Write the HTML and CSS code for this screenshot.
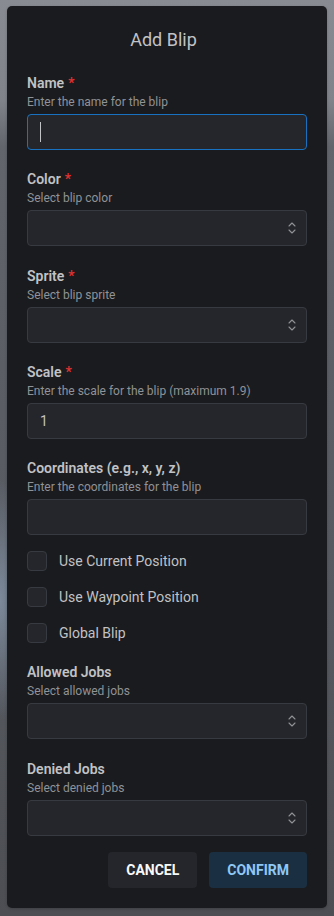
FILE: index.html
```html
<!DOCTYPE html>
<html lang="en">
<head>
<meta charset="utf-8">
<title>Add Blip</title>
<link rel="stylesheet" href="styles.css">
</head>
<body>
<div class="backdrop">
  <div class="modal">
    <h2 class="title">Add Blip</h2>

    <div class="field">
      <div class="label">Name<span class="req">*</span></div>
      <div class="desc">Enter the name for the blip</div>
      <div class="input focused"><span class="caret"></span></div>
    </div>

    <div class="field">
      <div class="label">Color<span class="req">*</span></div>
      <div class="desc">Select blip color</div>
      <div class="input select">
        <svg class="chev" width="8" height="14" viewBox="0 0 8 14"><path d="M1 5L4 2L7 5M1 9L4 12L7 9" fill="none" stroke="#909296" stroke-width="1.1" stroke-linecap="round" stroke-linejoin="round"/></svg>
      </div>
    </div>

    <div class="field">
      <div class="label">Sprite<span class="req">*</span></div>
      <div class="desc">Select blip sprite</div>
      <div class="input select">
        <svg class="chev" width="8" height="14" viewBox="0 0 8 14"><path d="M1 5L4 2L7 5M1 9L4 12L7 9" fill="none" stroke="#909296" stroke-width="1.1" stroke-linecap="round" stroke-linejoin="round"/></svg>
      </div>
    </div>

    <div class="field">
      <div class="label">Scale<span class="req">*</span></div>
      <div class="desc">Enter the scale for the blip (maximum 1.9)</div>
      <div class="input"><span class="value">1</span></div>
    </div>

    <div class="field coords">
      <div class="label">Coordinates (e.g., x, y, z)</div>
      <div class="desc">Enter the coordinates for the blip</div>
      <div class="input"></div>
    </div>

    <div class="checks">
      <div class="check"><span class="box"></span><span class="check-label">Use Current Position</span></div>
      <div class="check"><span class="box"></span><span class="check-label">Use Waypoint Position</span></div>
      <div class="check"><span class="box"></span><span class="check-label">Global Blip</span></div>
    </div>

    <div class="field">
      <div class="label">Allowed Jobs</div>
      <div class="desc">Select allowed jobs</div>
      <div class="input select">
        <svg class="chev" width="8" height="14" viewBox="0 0 8 14"><path d="M1 5L4 2L7 5M1 9L4 12L7 9" fill="none" stroke="#909296" stroke-width="1.1" stroke-linecap="round" stroke-linejoin="round"/></svg>
      </div>
    </div>

    <div class="field last">
      <div class="label">Denied Jobs</div>
      <div class="desc">Select denied jobs</div>
      <div class="input select">
        <svg class="chev" width="8" height="14" viewBox="0 0 8 14"><path d="M1 5L4 2L7 5M1 9L4 12L7 9" fill="none" stroke="#909296" stroke-width="1.1" stroke-linecap="round" stroke-linejoin="round"/></svg>
      </div>
    </div>

    <div class="actions">
      <button class="btn cancel">CANCEL</button>
      <button class="btn confirm">CONFIRM</button>
    </div>
  </div>
</div>
</body>
</html>
```

FILE: styles.css
```css
* { box-sizing: border-box; }

html, body {
  margin: 0;
  padding: 0;
  width: 334px;
  height: 916px;
  overflow: hidden;
}

body {
  font-family: Roboto, "Noto Sans", "Liberation Sans", sans-serif;
  background:
    radial-gradient(ellipse 30px 120px at 0px 600px, rgba(150, 170, 195, 0.6), rgba(150, 170, 195, 0) 100%),
    linear-gradient(180deg, #888b91 0%, #80838a 11%, #62656c 16%, #5b5e65 40%, #55585e 70%, #4c4e53 100%);
}

.backdrop {
  padding: 6px 7px 8px 7px;
}

.modal {
  width: 320px;
  background: #1a1b1e;
  border-radius: 5px;
  padding: 20px 20px 20px 20px;
  display: flex;
  flex-direction: column;
  box-shadow: 0 1px 3px rgba(0, 0, 0, 0.2);
}

.title {
  margin: 0 0 19px 0;
  font-size: 18px;
  font-weight: 400;
  line-height: 28px;
  color: #c1c2c5;
  text-align: center;
  padding-right: 7px;
}

.field {
  display: flex;
  flex-direction: column;
  margin-bottom: 19.33px;
}

.field.coords { margin-bottom: 16px; }
.field.last { margin-bottom: 16px; }

.label {
  font-size: 14px;
  font-weight: 600;
  line-height: 20px;
  color: #c1c2c5;
}

.req {
  color: #e03131;
  margin-left: 4px;
}

.desc {
  font-size: 12px;
  line-height: 18px;
  color: #909296;
  margin-bottom: 3px;
}

.input {
  height: 36px;
  background: #25262b;
  border: 1px solid #373a40;
  border-radius: 4px;
  display: flex;
  align-items: center;
  padding: 0 12px;
  font-size: 14px;
  color: #c1c2c5;
}

.input.focused {
  border-color: #1971c2;
}

.caret {
  display: block;
  width: 1px;
  height: 20px;
  background: #c1c2c5;
}

.input.select {
  justify-content: flex-end;
  padding-right: 10.5px;
}

.chev { display: block; }

.value { line-height: 20px; }

.checks {
  display: flex;
  flex-direction: column;
  gap: 16px;
  margin-bottom: 19px;
}

.check {
  display: flex;
  align-items: center;
  gap: 12px;
  height: 20px;
}

.box {
  width: 20px;
  height: 20px;
  background: #25262b;
  border: 1px solid #373a40;
  border-radius: 4px;
  flex: none;
}

.check-label {
  font-size: 14px;
  line-height: 20px;
  color: #c1c2c5;
}

.actions {
  display: flex;
  justify-content: flex-end;
  gap: 12px;
}

.btn {
  height: 36px;
  padding: 0 18px;
  border: 0;
  border-radius: 4px;
  font-family: Roboto, "Noto Sans", "Liberation Sans", sans-serif;
  font-size: 14px;
  font-weight: 700;
  line-height: 36px;
}

.btn.cancel {
  background: #25262b;
  color: #f8f9fa;
}

.btn.confirm {
  background: #1b2f42;
  color: #8fc8f5;
}
```
